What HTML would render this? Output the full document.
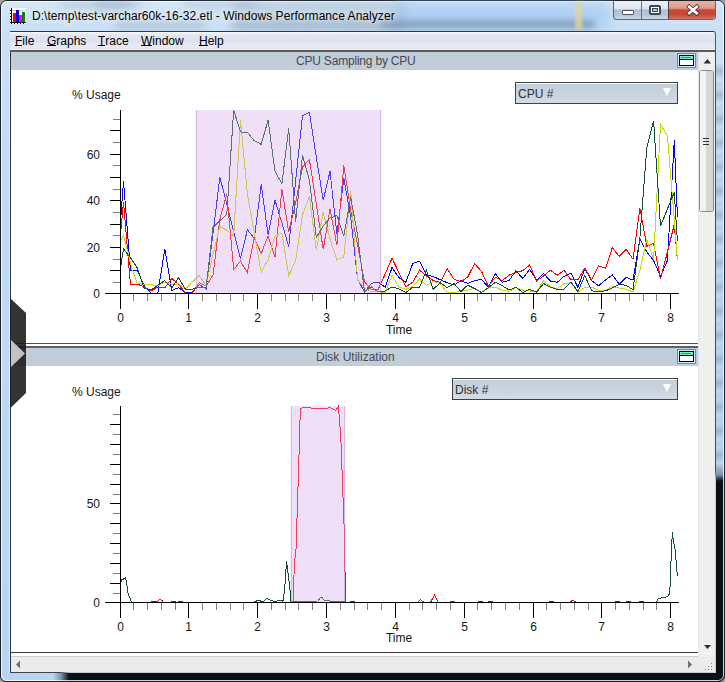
<!DOCTYPE html>
<html><head><meta charset="utf-8">
<style>
*{margin:0;padding:0;box-sizing:border-box}
html,body{width:725px;height:682px;overflow:hidden;background:#a0a0a0}
body{position:relative;font-family:"Liberation Sans",sans-serif;font-size:12px;color:#000}
.a{position:absolute}
svg text{font-family:"Liberation Sans",sans-serif;font-size:12px}
.lbl{fill:#161616}
#frame{left:0;top:0;width:725px;height:682px;border:1px solid #1a2028;border-radius:7px 7px 6px 6px;overflow:hidden;
 background:linear-gradient(180deg,#d4e6f7 0,#cae0f5 30px,#c0daf3 200px,#b8d4f1 682px)}
#frame .in{position:absolute;left:0;top:0;right:0;bottom:0;border:1px solid rgba(255,255,255,0.8);border-radius:6px}
#frame .dkb{position:absolute;left:0;top:671px;width:725px;height:11px;background:linear-gradient(90deg,rgba(12,16,20,0) 0,rgba(12,16,20,0) 52px,rgba(60,80,100,0.5) 60px,rgba(12,16,20,1) 68px,rgba(12,16,20,1) 100%)}
#frame .dkr{position:absolute;left:714px;top:0;width:11px;height:682px;background:linear-gradient(180deg,rgba(12,16,20,0) 0,rgba(12,16,20,0) 462px,rgba(70,90,110,0.5) 474px,rgba(12,16,20,1) 480px,rgba(12,16,20,1) 100%)}
#frame .in2{position:absolute;left:1px;top:1px;right:1px;bottom:1px;border-radius:5px;box-shadow:inset 0 0 0 1px rgba(255,255,255,0.0)}
#title{left:32px;top:9px;letter-spacing:0.05px;text-shadow:0 0 6px rgba(255,255,255,0.9),0 0 10px rgba(255,255,255,0.7);font-size:12px;color:#000;white-space:nowrap}
#menubar{left:10px;top:31px;width:706px;height:21px;border-top:1px solid #303848;border-right:1px solid #505a66;border-radius:0 3px 0 0;
 background:linear-gradient(#ffffff 0,#f0f2fa 1px,#e3e6f2 3px,#dde1ee 10px,#e6e8f3 11px,#e6e8f3 16px,#d8dce8 16px,#f0f0f0 17px,#f0f0f0 18px,#5a5a5a 18px)}
.mi{position:absolute;top:2px;white-space:nowrap;margin-left:-1px}
.mi u{text-decoration:none;position:relative}.mi u:after{content:"";position:absolute;left:0;right:0;top:11px;height:1px;background:#000}
#client{left:10px;top:52px;width:706px;height:621px;background:#fff;border-left:1px solid #2c3440;border-right:1px solid #c8ccd4;border-bottom:1px solid #3a4250}
.hdr{position:absolute;background:#c1cdd9;height:18px;color:#484850;font-size:12px;white-space:nowrap}
.dd{position:absolute;border:1px solid #404040;background:linear-gradient(#fff 0,#fff 1px,#c3cfdb 1px,#c8d3de 50%,#d3dce6 100%);height:22px}
.dd span{position:absolute;left:2px;top:4px;color:#303030}
.dd i{position:absolute;right:6px;top:5px;width:0;height:0;border-left:4px solid transparent;border-right:4px solid transparent;border-top:8px solid #fff}
.ib{position:absolute;width:20px;height:16px;border:2px solid #3399ff;background:#c1cdd9}
.ib b{position:absolute;left:0;top:0;width:16px;height:12px;border:2px solid #000;background:#fff}
.ib b:before{content:"";position:absolute;left:0;top:0;width:12px;height:3px;background:#7ae8c0;border-bottom:1px solid #000}
.ib b:after{content:"";position:absolute;left:2px;top:1px;width:8px;height:1px;background:#4a6ad8}
.sb{background:#ececec}
</style></head><body>
<div id="frame" class="a"><div class="a" style="left:714px;top:62px;width:9px;height:418px;background:repeating-linear-gradient(180deg,rgba(70,100,130,0.0) 0,rgba(70,100,130,0.28) 8px,rgba(70,100,130,0.0) 16px,rgba(70,100,130,0.1) 24px);"></div><div class="dkb"></div><div class="dkr"></div><div class="in"></div></div>
<!-- title bar blur blobs -->
<div class="a" style="left:235px;top:1px;width:170px;height:30px;background:rgba(110,130,155,0.22);filter:blur(5px)"></div>
<div class="a" style="left:60px;top:0px;width:70px;height:10px;background:rgba(110,130,150,0.2);filter:blur(4px)"></div>
<div class="a" style="left:395px;top:2px;width:215px;height:28px;background:rgba(150,195,240,0.55);filter:blur(6px)"></div>
<div class="a" style="left:380px;top:20px;width:215px;height:9px;background:rgba(70,95,125,0.40);filter:blur(3px);border-radius:4px"></div>
<div class="a" style="left:230px;top:21px;width:150px;height:8px;background:rgba(90,110,135,0.22);filter:blur(4px)"></div>
<div class="a" style="left:115px;top:21px;width:90px;height:8px;background:rgba(90,110,135,0.25);filter:blur(4px)"></div>
<div class="a" style="left:95px;top:0px;width:45px;height:8px;background:rgba(90,110,135,0.22);filter:blur(4px)"></div>
<div class="a" style="left:185px;top:0px;width:70px;height:8px;background:rgba(90,110,135,0.18);filter:blur(4px)"></div>
<div class="a" style="left:575px;top:2px;width:7px;height:28px;background:rgba(225,215,150,0.75);filter:blur(1.5px)"></div>
<!-- icon -->
<svg class="a" style="left:10px;top:8px" width="16" height="16" viewBox="0 0 16 16" shape-rendering="crispEdges">
<rect x="0" y="0" width="16" height="16" fill="#fff"/>
<rect x="1" y="2" width="15" height="1" fill="#c8d0d0"/>
<rect x="3" y="5" width="3" height="9" fill="#ff0000"/>
<rect x="6" y="2" width="3" height="12" fill="#0000ff"/>
<rect x="9" y="7" width="3" height="7" fill="#ff00ff"/>
<rect x="12" y="4" width="3" height="10" fill="#008000"/>
<rect x="1" y="0" width="1" height="16" fill="#000"/>
<rect x="0" y="14" width="16" height="1" fill="#000"/>
<rect x="0" y="2" width="1" height="1" fill="#000"/><rect x="0" y="5" width="1" height="1" fill="#000"/><rect x="0" y="8" width="1" height="1" fill="#000"/><rect x="0" y="11" width="1" height="1" fill="#000"/>
<rect x="1" y="15" width="1" height="1" fill="#000"/><rect x="4" y="15" width="1" height="1" fill="#000"/><rect x="7" y="15" width="1" height="1" fill="#000"/><rect x="10" y="15" width="1" height="1" fill="#000"/><rect x="13" y="15" width="1" height="1" fill="#000"/>
</svg>
<div id="title" class="a">D:\temp\test-varchar60k-16-32.etl - Windows Performance Analyzer</div>
<!-- caption buttons -->
<div class="a" style="left:613px;top:1px;width:103px;height:19px;border:1px solid #5a6472;border-top:none;border-radius:0 0 4px 4px;overflow:hidden;
 background:linear-gradient(#edf2f8 0,#dde6f0 42%,#aebfd2 50%,#b4c6da 78%,#cfdcea 100%)"></div>
<div class="a" style="left:641px;top:1px;width:1px;height:18px;background:#6a7482"></div>
<div class="a" style="left:668px;top:1px;width:47px;height:18px;border-left:1px solid #5a3a36;border-radius:0 0 4px 0;
 background:linear-gradient(#eab2a2 0,#df9a88 40%,#c84832 50%,#c24a36 75%,#d87060 100%)"></div>
<div class="a" style="left:622px;top:10px;width:12px;height:5px;background:#fff;border:1px solid #4a5260;border-radius:1px"></div>
<div class="a" style="left:649px;top:5px;width:12px;height:10px;border:2px solid #3e4654;border-radius:2px;background:#fff"></div>
<div class="a" style="left:652px;top:8px;width:6px;height:4px;background:#b4c4d4;border:1px solid #3e4654"></div>
<svg class="a" style="left:686px;top:4px" width="14" height="12" viewBox="0 0 14 12"><path d="M3.2,2.8 L10.8,9.2 M10.8,2.8 L3.2,9.2" stroke="#3a3440" stroke-width="4.2" stroke-linecap="square"/><path d="M3.2,2.8 L10.8,9.2 M10.8,2.8 L3.2,9.2" stroke="#fff" stroke-width="2.6" stroke-linecap="square"/></svg>
<div id="menubar" class="a">
 <div class="mi" style="left:6px"><u>F</u>ile</div>
 <div class="mi" style="left:38px"><u>G</u>raphs</div>
 <div class="mi" style="left:89px"><u>T</u>race</div>
 <div class="mi" style="left:132px"><u>W</u>indow</div>
 <div class="mi" style="left:190px"><u>H</u>elp</div>
</div>
<div id="client" class="a"></div>
<div class="a" style="left:9px;top:52px;width:1px;height:621px;background:rgba(255,255,255,0.55)"></div>
<!-- vertical scrollbar -->
<div class="a" style="left:698px;top:52px;width:17px;height:621px;background:#efefef"></div>
<div class="a" style="left:698px;top:52px;width:1px;height:605px;background:#e4e4e4"></div>
<svg class="a" style="left:698px;top:52px" width="17" height="605" viewBox="0 0 17 605">
<path d="M5.5,11.5 L13,11.5 L9.5,7 Z" fill="#303030"/>
<rect x="1.5" y="18.5" width="14" height="141" rx="2" fill="#e0e0e0" stroke="#8a8a8a"/>
<rect x="2" y="19" width="6" height="140" fill="#f2f2f2"/>
<rect x="8" y="19" width="7" height="140" fill="#d6d6d6"/>
<rect x="5" y="86" width="6" height="1" fill="#303030"/><rect x="5" y="89" width="6" height="1" fill="#303030"/><rect x="5" y="92" width="6" height="1" fill="#303030"/>
<path d="M6,593 L13,593 L9.5,597 Z" fill="#303030"/>
</svg>
<div class="a" style="left:715px;top:52px;width:1px;height:621px;background:#3c4a5a"></div>
<!-- horizontal scrollbar -->
<div class="a" style="left:11px;top:653px;width:704px;height:1px;background:#fafafa"></div>
<div class="a" style="left:11px;top:656px;width:687px;height:1px;background:#d0d0d0"></div>
<div class="a sb" style="left:11px;top:657px;width:704px;height:15px;background:#ebebeb"></div>
<svg class="a" style="left:11px;top:657px" width="704" height="15" viewBox="0 0 704 15">
<path d="M9,7.5 L5,7.5 L9,3.5 Z M9,7.5 L9,11.5 L5,7.5Z" fill="#707070"/>
<path d="M677,3.5 L681,7.5 L677,11.5 Z" fill="#707070"/>
</svg>
<div class="a" style="left:10px;top:652px;width:688px;height:1px;background:#3a3a3a"></div>
<div class="a" style="left:715px;top:470px;width:1px;height:203px;background:linear-gradient(180deg,rgba(200,206,212,0) 0,rgba(200,206,212,1) 10px)"></div>
<div class="a" style="left:60px;top:672px;width:656px;height:1px;background:linear-gradient(90deg,rgba(200,206,212,0) 0,rgba(200,206,212,1) 10px)"></div>
<svg class="a" style="left:703px;top:661px" width="10" height="10" viewBox="0 0 10 10" shape-rendering="crispEdges">
<rect x="8" y="2" width="1" height="1" fill="#8a8a8a"/><rect x="5" y="5" width="1" height="1" fill="#8a8a8a"/><rect x="8" y="5" width="1" height="1" fill="#8a8a8a"/>
<rect x="2" y="8" width="1" height="1" fill="#8a8a8a"/><rect x="5" y="8" width="1" height="1" fill="#8a8a8a"/><rect x="8" y="8" width="1" height="1" fill="#8a8a8a"/>
</svg>
<!-- panel headers -->
<div class="hdr" style="left:11px;top:52px;width:687px"><span class="a" style="left:285px;top:2px;letter-spacing:-0.2px">CPU Sampling by CPU</span></div>
<svg class="a" style="left:677px;top:53px" width="19" height="15" viewBox="0 0 19 15" shape-rendering="crispEdges"><rect x="0" y="0" width="19" height="15" fill="#3399ff"/><rect x="1" y="1" width="17" height="13" fill="#c8e8ff"/><rect x="2" y="2" width="15" height="11" fill="#000"/><rect x="3" y="3" width="13" height="3" fill="#80f0c0"/><rect x="4" y="4" width="10" height="1" fill="#5070e0"/><rect x="3" y="7" width="13" height="5" fill="#fff"/></svg>
<div class="a" style="left:11px;top:343px;width:687px;height:1px;background:#505050"></div>
<div class="a" style="left:11px;top:346px;width:687px;height:2px;background:#606060"></div>
<div class="hdr" style="left:11px;top:348px;width:687px"><span class="a" style="left:305px;top:2px">Disk Utilization</span></div>
<svg class="a" style="left:677px;top:349px" width="19" height="15" viewBox="0 0 19 15" shape-rendering="crispEdges"><rect x="0" y="0" width="19" height="15" fill="#3399ff"/><rect x="1" y="1" width="17" height="13" fill="#c8e8ff"/><rect x="2" y="2" width="15" height="11" fill="#000"/><rect x="3" y="3" width="13" height="3" fill="#80f0c0"/><rect x="4" y="4" width="10" height="1" fill="#5070e0"/><rect x="3" y="7" width="13" height="5" fill="#fff"/></svg>
<div class="dd" style="left:515px;top:82px;width:163px"><span>CPU #</span><i></i></div>
<div class="dd" style="left:452px;top:378px;width:226px"><span>Disk #</span><i></i></div>
<svg class="a" style="left:0;top:0" width="725" height="682" viewBox="0 0 725 682">
<rect x="195" y="110" width="1" height="183" fill="#f6eefa"/><rect x="381" y="110" width="1" height="183" fill="#f6eefa"/>
<rect x="290" y="406" width="1" height="196" fill="#f6eefa"/><rect x="345" y="406" width="1" height="196" fill="#f6eefa"/>
<g class="lines" fill="none" stroke-width="1" shape-rendering="crispEdges">
<path d="M120.5,222.0 L123.5,181.0 L130.4,270.0 L137.3,270.0 L144.2,286.0 L151.0,293.0 L157.9,293.0 L164.8,249.0 L171.7,290.5 L178.6,287.6 L185.5,292.6 L192.3,292.2 L199.2,284.5 L206.1,288.9 L213.0,233.0 L219.9,177.3 L226.8,204.0 L233.7,232.0 L240.5,258.4 L247.4,229.7 L254.3,238.5 L261.2,184.4 L268.1,235.0 L275.0,200.2 L281.9,223.0 L288.7,246.6 L295.6,181.0 L302.5,115.6 L309.4,112.3 L316.3,157.0 L323.2,200.2 L330.0,171.3 L336.9,233.7 L343.8,178.3 L350.7,217.0 L357.6,279.0 L364.5,292.2 L371.4,283.3 L378.2,282.1 L385.1,287.3 L392.0,267.6 L398.9,277.5 L405.8,282.3 L412.7,263.6 L419.6,261.1 L426.4,275.2 L433.3,276.5 L440.2,279.8 L447.1,282.7 L454.0,285.1 L460.9,280.6 L467.8,283.5 L474.6,280.6 L481.5,279.4 L488.4,287.2 L495.3,273.6 L502.2,282.3 L509.1,280.6 L515.9,270.7 L522.8,278.5 L529.7,269.4 L536.6,280.2 L543.5,273.6 L550.4,281.0 L557.3,282.3 L564.1,276.3 L571.0,273.3 L577.9,287.2 L584.8,268.9 L591.7,280.6 L598.6,285.8 L605.5,279.9 L612.3,274.8 L619.2,284.2 L626.1,277.3 L633.0,280.1 L639.9,239.1 L646.8,252.0 L653.6,260.6 L660.5,276.3 L667.4,260.6 L674.3,140.0 L677.4,217.0" stroke="#0000ff"/>
<path d="M120.5,234.0 L123.5,202.0 L130.4,284.0 L137.3,284.0 L144.2,287.0 L151.0,291.0 L157.9,287.0 L164.8,288.0 L171.7,278.4 L178.6,284.3 L185.5,293.0 L192.3,293.0 L199.2,282.5 L206.1,286.2 L213.0,274.8 L219.9,219.0 L226.8,193.8 L233.7,269.5 L240.5,261.3 L247.4,272.5 L254.3,237.9 L261.2,253.5 L268.1,236.1 L275.0,257.2 L281.9,189.1 L288.7,232.0 L295.6,203.0 L302.5,167.2 L309.4,159.5 L316.3,204.0 L323.2,249.3 L330.0,209.0 L336.9,245.4 L343.8,165.4 L350.7,210.0 L357.6,245.0 L364.5,282.1 L371.4,289.4 L378.2,289.4 L385.1,274.0 L392.0,258.3 L398.9,272.5 L405.8,286.8 L412.7,282.3 L419.6,270.2 L426.4,276.0 L433.3,280.6 L440.2,282.3 L447.1,268.6 L454.0,279.2 L460.9,281.8 L467.8,276.9 L474.6,263.6 L481.5,271.5 L488.4,286.4 L495.3,277.3 L502.2,280.6 L509.1,275.2 L515.9,272.3 L522.8,270.7 L529.7,264.9 L536.6,281.0 L543.5,276.0 L550.4,270.2 L557.3,275.2 L564.1,270.3 L571.0,279.9 L577.9,279.9 L584.8,268.2 L591.7,279.9 L598.6,266.0 L605.5,268.2 L612.3,247.7 L619.2,256.4 L626.1,249.2 L633.0,259.2 L639.9,208.0 L646.8,246.3 L653.6,243.4 L660.5,279.2 L667.4,252.0 L674.3,224.3 L677.4,260.0" stroke="#ff0000"/>
<path d="M120.5,241.0 L123.5,235.0 L130.4,263.0 L137.3,283.5 L144.2,284.5 L151.0,284.5 L157.9,286.0 L164.8,282.0 L171.7,284.3 L178.6,283.9 L185.5,288.9 L192.3,282.0 L199.2,275.5 L206.1,285.5 L213.0,253.7 L219.9,226.7 L226.8,230.2 L233.7,236.0 L240.5,120.2 L247.4,194.0 L254.3,233.0 L261.2,272.5 L268.1,259.6 L275.0,236.0 L281.9,233.2 L288.7,275.4 L295.6,260.7 L302.5,215.0 L309.4,196.1 L316.3,250.2 L323.2,212.5 L330.0,238.5 L336.9,260.2 L343.8,256.8 L350.7,191.0 L357.6,280.0 L364.5,288.0 L371.4,292.0 L378.2,291.8 L385.1,292.6 L392.0,275.2 L398.9,287.0 L405.8,289.3 L412.7,286.4 L419.6,279.0 L426.4,285.6 L433.3,281.4 L440.2,283.9 L447.1,292.2 L454.0,292.6 L460.9,291.4 L467.8,290.1 L474.6,288.5 L481.5,292.2 L488.4,288.0 L495.3,287.2 L502.2,290.1 L509.1,291.4 L515.9,287.6 L522.8,290.1 L529.7,290.9 L536.6,291.8 L543.5,280.6 L550.4,286.8 L557.3,288.5 L564.1,283.5 L571.0,282.8 L577.9,292.4 L584.8,287.2 L591.7,287.2 L598.6,290.2 L605.5,290.2 L612.3,286.5 L619.2,288.1 L626.1,289.2 L633.0,292.0 L639.9,270.1 L646.8,239.6 L653.6,259.6 L660.5,124.3 L667.4,135.7 L674.3,220.0 L677.4,260.0" stroke="#c8d800"/>
<path d="M120.5,268.0 L123.5,249.0 L130.4,257.7 L137.3,268.0 L144.2,288.3 L151.0,290.0 L157.9,285.3 L164.8,280.5 L171.7,288.0 L178.6,277.6 L185.5,289.3 L192.3,289.3 L199.2,287.3 L206.1,287.0 L213.0,227.5 L219.9,220.7 L226.8,214.3 L233.7,110.0 L240.5,132.0 L247.4,132.2 L254.3,140.8 L261.2,144.3 L268.1,120.2 L275.0,171.3 L281.9,183.7 L288.7,128.5 L295.6,222.0 L302.5,155.4 L309.4,180.0 L316.3,237.3 L323.2,226.0 L330.0,218.0 L336.9,215.5 L343.8,236.0 L350.7,197.5 L357.6,235.0 L364.5,291.8 L371.4,287.0 L378.2,291.8 L385.1,291.0 L392.0,287.0 L398.9,288.8 L405.8,292.6 L412.7,287.2 L419.6,287.2 L426.4,270.2 L433.3,289.3 L440.2,282.7 L447.1,287.6 L454.0,283.5 L460.9,291.4 L467.8,285.1 L474.6,288.5 L481.5,292.6 L488.4,287.6 L495.3,282.3 L502.2,285.6 L509.1,290.1 L515.9,287.2 L522.8,292.6 L529.7,289.3 L536.6,292.2 L543.5,283.5 L550.4,287.2 L557.3,289.3 L564.1,289.0 L571.0,282.1 L577.9,291.6 L584.8,275.5 L591.7,290.9 L598.6,291.6 L605.5,290.9 L612.3,288.0 L619.2,284.2 L626.1,285.4 L633.0,289.7 L639.9,238.0 L646.8,148.0 L653.6,121.2 L660.5,226.2 L667.4,209.0 L674.3,192.4 L677.4,241.5" stroke="#134d33"/>
<path d="M120.5,585.0 L121.5,580.0 L125.5,578.0 L126.5,582.0 L128.0,593.0 L131.5,602.0 L151.0,602.0 L152.0,601.0 L156.0,601.0 L157.0,602.0 L171.0,602.0 L172.0,601.0 L175.0,601.0 L176.0,602.0 L178.0,602.0 L179.0,601.0 L182.0,601.0 L183.0,602.0 L254.0,602.0 L255.0,601.5 L258.8,600.3 L262.8,601.9 L266.7,598.2 L268.5,599.4 L271.5,600.6 L274.6,601.5 L277.3,601.0 L281.2,600.1 L283.0,601.5 L283.9,594.9 L285.2,582.5 L286.5,561.0 L287.4,567.6 L288.7,578.1 L290.0,589.6 L290.9,602.0 L292.0,601.5 L318.0,601.0 L320.0,598.0 L322.0,597.5 L324.0,600.0 L330.0,601.0 L345.0,601.5 L346.0,602.0 L350.0,602.0 L351.0,601.0 L354.0,601.0 L355.0,602.0 L478.0,602.0 L479.0,601.0 L482.0,601.0 L483.0,602.0 L488.0,602.0 L489.0,601.0 L492.0,601.0 L493.0,602.0 L549.7,602.0 L550.0,601.0 L553.8,601.0 L554.0,602.0 L615.0,602.0 L616.0,601.0 L619.0,601.0 L619.5,602.0 L626.0,602.0 L627.0,601.0 L630.0,601.0 L630.5,602.0 L639.7,602.0 L640.0,601.0 L643.5,601.0 L644.0,602.0 L656.3,602.0 L658.4,598.7 L662.5,597.6 L667.7,596.6 L669.8,593.5 L670.8,565.5 L671.8,542.8 L672.4,532.4 L673.3,540.7 L675.0,549.0 L677.4,575.9" stroke="#134d33"/>
<path d="M120.5,602.0 L157.0,602.0 L158.0,601.0 L160.0,599.2 L162.4,601.0 L163.0,602.0 L293.0,602.0 L293.5,588.7 L294.5,561.4 L296.0,550.0 L299.5,440.0 L300.0,420.0 L300.9,408.8 L303.2,407.1 L313.0,408.2 L326.4,408.2 L330.8,407.7 L335.7,410.5 L338.5,406.0 L339.6,422.6 L340.7,435.0 L344.6,540.0 L345.4,602.0 L418.0,602.0 L420.5,599.7 L423.5,602.0 L430.7,602.0 L434.5,594.9 L438.0,602.0 L450.0,602.0 L450.5,601.0 L454.0,601.0 L454.5,602.0 L570.0,602.0 L572.5,600.3 L575.5,602.0 L677.0,602.0" stroke="#ff0000"/>
</g>
<rect x="196" y="110" width="185" height="183" fill="rgb(212,168,233)" fill-opacity="0.37"/><rect x="196" y="110" width="1" height="183" fill="rgb(190,120,210)" fill-opacity="0.4"/><rect x="380" y="110" width="1" height="183" fill="rgb(190,120,210)" fill-opacity="0.4"/>
<rect x="291" y="406" width="54" height="196" fill="rgb(212,168,233)" fill-opacity="0.37"/><rect x="291" y="406" width="1" height="196" fill="rgb(190,120,210)" fill-opacity="0.4"/><rect x="344" y="406" width="1" height="196" fill="rgb(190,120,210)" fill-opacity="0.4"/>
<g shape-rendering="crispEdges">
<rect x="120" y="110" width="1" height="184" fill="#000"/>
<rect x="105" y="293" width="574" height="1" fill="#000"/>
<rect x="113" y="119" width="7" height="1" fill="#808080"/>
<rect x="110" y="130" width="10" height="1" fill="#000"/>
<rect x="113" y="142" width="7" height="1" fill="#808080"/>
<rect x="110" y="154" width="10" height="1" fill="#000"/>
<rect x="113" y="165" width="7" height="1" fill="#808080"/>
<rect x="110" y="177" width="10" height="1" fill="#000"/>
<rect x="113" y="189" width="7" height="1" fill="#808080"/>
<rect x="110" y="200" width="10" height="1" fill="#000"/>
<rect x="113" y="212" width="7" height="1" fill="#808080"/>
<rect x="110" y="224" width="10" height="1" fill="#000"/>
<rect x="113" y="235" width="7" height="1" fill="#808080"/>
<rect x="110" y="247" width="10" height="1" fill="#000"/>
<rect x="113" y="259" width="7" height="1" fill="#808080"/>
<rect x="110" y="270" width="10" height="1" fill="#000"/>
<rect x="113" y="282" width="7" height="1" fill="#808080"/>
<text x="100" y="297.8" text-anchor="end" class="lbl">0</text>
<text x="100" y="251.8" text-anchor="end" class="lbl">20</text>
<text x="100" y="204.8" text-anchor="end" class="lbl">40</text>
<text x="100" y="158.8" text-anchor="end" class="lbl">60</text>
<rect x="120" y="294" width="1" height="15" fill="#000"/>
<text x="120.5" y="322" text-anchor="middle" class="lbl">0</text>
<rect x="133" y="294" width="1" height="7" fill="#808080"/>
<rect x="147" y="294" width="1" height="7" fill="#808080"/>
<rect x="161" y="294" width="1" height="7" fill="#808080"/>
<rect x="175" y="294" width="1" height="7" fill="#808080"/>
<rect x="188" y="294" width="1" height="15" fill="#000"/>
<text x="188.5" y="322" text-anchor="middle" class="lbl">1</text>
<rect x="202" y="294" width="1" height="7" fill="#808080"/>
<rect x="216" y="294" width="1" height="7" fill="#808080"/>
<rect x="230" y="294" width="1" height="7" fill="#808080"/>
<rect x="243" y="294" width="1" height="7" fill="#808080"/>
<rect x="257" y="294" width="1" height="15" fill="#000"/>
<text x="257.5" y="322" text-anchor="middle" class="lbl">2</text>
<rect x="271" y="294" width="1" height="7" fill="#808080"/>
<rect x="285" y="294" width="1" height="7" fill="#808080"/>
<rect x="298" y="294" width="1" height="7" fill="#808080"/>
<rect x="312" y="294" width="1" height="7" fill="#808080"/>
<rect x="326" y="294" width="1" height="15" fill="#000"/>
<text x="326.5" y="322" text-anchor="middle" class="lbl">3</text>
<rect x="340" y="294" width="1" height="7" fill="#808080"/>
<rect x="354" y="294" width="1" height="7" fill="#808080"/>
<rect x="367" y="294" width="1" height="7" fill="#808080"/>
<rect x="381" y="294" width="1" height="7" fill="#808080"/>
<rect x="395" y="294" width="1" height="15" fill="#000"/>
<text x="395.5" y="322" text-anchor="middle" class="lbl">4</text>
<rect x="409" y="294" width="1" height="7" fill="#808080"/>
<rect x="422" y="294" width="1" height="7" fill="#808080"/>
<rect x="436" y="294" width="1" height="7" fill="#808080"/>
<rect x="450" y="294" width="1" height="7" fill="#808080"/>
<rect x="464" y="294" width="1" height="15" fill="#000"/>
<text x="464.5" y="322" text-anchor="middle" class="lbl">5</text>
<rect x="477" y="294" width="1" height="7" fill="#808080"/>
<rect x="491" y="294" width="1" height="7" fill="#808080"/>
<rect x="505" y="294" width="1" height="7" fill="#808080"/>
<rect x="519" y="294" width="1" height="7" fill="#808080"/>
<rect x="533" y="294" width="1" height="15" fill="#000"/>
<text x="533.5" y="322" text-anchor="middle" class="lbl">6</text>
<rect x="546" y="294" width="1" height="7" fill="#808080"/>
<rect x="560" y="294" width="1" height="7" fill="#808080"/>
<rect x="574" y="294" width="1" height="7" fill="#808080"/>
<rect x="588" y="294" width="1" height="7" fill="#808080"/>
<rect x="601" y="294" width="1" height="15" fill="#000"/>
<text x="601.5" y="322" text-anchor="middle" class="lbl">7</text>
<rect x="615" y="294" width="1" height="7" fill="#808080"/>
<rect x="629" y="294" width="1" height="7" fill="#808080"/>
<rect x="643" y="294" width="1" height="7" fill="#808080"/>
<rect x="656" y="294" width="1" height="7" fill="#808080"/>
<rect x="670" y="294" width="1" height="15" fill="#000"/>
<text x="670.5" y="322" text-anchor="middle" class="lbl">8</text>
<text x="399" y="333.5" text-anchor="middle" class="lbl">Time</text>
<text x="72" y="99" class="lbl">% Usage</text>
<rect x="120" y="406" width="1" height="197" fill="#000"/>
<rect x="105" y="602" width="574" height="1" fill="#000"/>
<rect x="113" y="414" width="7" height="1" fill="#808080"/>
<rect x="110" y="424" width="10" height="1" fill="#000"/>
<rect x="113" y="434" width="7" height="1" fill="#808080"/>
<rect x="110" y="444" width="10" height="1" fill="#000"/>
<rect x="113" y="454" width="7" height="1" fill="#808080"/>
<rect x="110" y="464" width="10" height="1" fill="#000"/>
<rect x="113" y="474" width="7" height="1" fill="#808080"/>
<rect x="110" y="484" width="10" height="1" fill="#000"/>
<rect x="113" y="494" width="7" height="1" fill="#808080"/>
<rect x="110" y="503" width="10" height="1" fill="#000"/>
<rect x="113" y="513" width="7" height="1" fill="#808080"/>
<rect x="110" y="523" width="10" height="1" fill="#000"/>
<rect x="113" y="533" width="7" height="1" fill="#808080"/>
<rect x="110" y="543" width="10" height="1" fill="#000"/>
<rect x="113" y="553" width="7" height="1" fill="#808080"/>
<rect x="110" y="563" width="10" height="1" fill="#000"/>
<rect x="113" y="573" width="7" height="1" fill="#808080"/>
<rect x="110" y="583" width="10" height="1" fill="#000"/>
<rect x="113" y="593" width="7" height="1" fill="#808080"/>
<text x="100" y="606.8" text-anchor="end" class="lbl">0</text>
<text x="100" y="507.8" text-anchor="end" class="lbl">50</text>
<rect x="120" y="603" width="1" height="15" fill="#000"/>
<text x="120.5" y="631" text-anchor="middle" class="lbl">0</text>
<rect x="133" y="603" width="1" height="7" fill="#808080"/>
<rect x="147" y="603" width="1" height="7" fill="#808080"/>
<rect x="161" y="603" width="1" height="7" fill="#808080"/>
<rect x="175" y="603" width="1" height="7" fill="#808080"/>
<rect x="188" y="603" width="1" height="15" fill="#000"/>
<text x="188.5" y="631" text-anchor="middle" class="lbl">1</text>
<rect x="202" y="603" width="1" height="7" fill="#808080"/>
<rect x="216" y="603" width="1" height="7" fill="#808080"/>
<rect x="230" y="603" width="1" height="7" fill="#808080"/>
<rect x="243" y="603" width="1" height="7" fill="#808080"/>
<rect x="257" y="603" width="1" height="15" fill="#000"/>
<text x="257.5" y="631" text-anchor="middle" class="lbl">2</text>
<rect x="271" y="603" width="1" height="7" fill="#808080"/>
<rect x="285" y="603" width="1" height="7" fill="#808080"/>
<rect x="298" y="603" width="1" height="7" fill="#808080"/>
<rect x="312" y="603" width="1" height="7" fill="#808080"/>
<rect x="326" y="603" width="1" height="15" fill="#000"/>
<text x="326.5" y="631" text-anchor="middle" class="lbl">3</text>
<rect x="340" y="603" width="1" height="7" fill="#808080"/>
<rect x="354" y="603" width="1" height="7" fill="#808080"/>
<rect x="367" y="603" width="1" height="7" fill="#808080"/>
<rect x="381" y="603" width="1" height="7" fill="#808080"/>
<rect x="395" y="603" width="1" height="15" fill="#000"/>
<text x="395.5" y="631" text-anchor="middle" class="lbl">4</text>
<rect x="409" y="603" width="1" height="7" fill="#808080"/>
<rect x="422" y="603" width="1" height="7" fill="#808080"/>
<rect x="436" y="603" width="1" height="7" fill="#808080"/>
<rect x="450" y="603" width="1" height="7" fill="#808080"/>
<rect x="464" y="603" width="1" height="15" fill="#000"/>
<text x="464.5" y="631" text-anchor="middle" class="lbl">5</text>
<rect x="477" y="603" width="1" height="7" fill="#808080"/>
<rect x="491" y="603" width="1" height="7" fill="#808080"/>
<rect x="505" y="603" width="1" height="7" fill="#808080"/>
<rect x="519" y="603" width="1" height="7" fill="#808080"/>
<rect x="533" y="603" width="1" height="15" fill="#000"/>
<text x="533.5" y="631" text-anchor="middle" class="lbl">6</text>
<rect x="546" y="603" width="1" height="7" fill="#808080"/>
<rect x="560" y="603" width="1" height="7" fill="#808080"/>
<rect x="574" y="603" width="1" height="7" fill="#808080"/>
<rect x="588" y="603" width="1" height="7" fill="#808080"/>
<rect x="601" y="603" width="1" height="15" fill="#000"/>
<text x="601.5" y="631" text-anchor="middle" class="lbl">7</text>
<rect x="615" y="603" width="1" height="7" fill="#808080"/>
<rect x="629" y="603" width="1" height="7" fill="#808080"/>
<rect x="643" y="603" width="1" height="7" fill="#808080"/>
<rect x="656" y="603" width="1" height="7" fill="#808080"/>
<rect x="670" y="603" width="1" height="15" fill="#000"/>
<text x="670.5" y="631" text-anchor="middle" class="lbl">8</text>
<text x="399" y="642" text-anchor="middle" class="lbl">Time</text>
<text x="72" y="395.7" class="lbl">% Usage</text>
</g>
</svg>
<!-- expander tab -->
<svg class="a" style="left:10px;top:298px" width="17" height="111" viewBox="0 0 17 111">
<path d="M0.5,0.5 L16,15 L16,95 L0.5,110 Z" fill="rgb(20,20,20)" fill-opacity="0.868"/>
<path d="M1,42 L15,55.5 L1,69 Z" fill="rgb(205,205,205)" fill-opacity="0.93"/>
</svg>
</body></html>
